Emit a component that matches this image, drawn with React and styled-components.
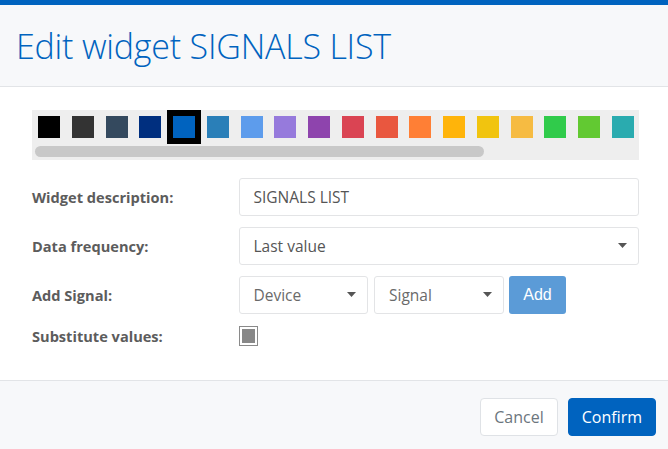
import React from 'react';
import styled, { createGlobalStyle } from 'styled-components';

const GlobalStyle = createGlobalStyle`
  html, body {
    margin: 0;
    padding: 0;
    background: #ffffff;
    font-family: "Open Sans", "Liberation Sans", sans-serif;
  }
  * { box-sizing: border-box; }
`;

const COLORS = [
  '#000000', '#333333', '#34495e', '#002f7f', '#0063bf', '#2a7fb8',
  '#5d9cec', '#967adc', '#8e44ad', '#da4453', '#e9573f', '#ff7f35',
  '#ffb40a', '#f1c40f', '#f6bb42', '#30cb4b', '#62c932', '#2aabaf',
  '#1abc9c', '#16a085', '#7f8c8d', '#95a5a6', '#bdc3c7', '#ecf0f1',
];

const Modal = styled.div`
  display: flex;
  flex-direction: column;
  height: 100vh;
  border-top: 5px solid #0063bf;
`;

const Header = styled.div`
  height: 82px;
  background: #f7f8fa;
  border-bottom: 1px solid #e2e4e7;
  padding: 0 0 0 16px;
  display: flex;
  align-items: center;
`;

const Title = styled.h1`
  margin: 0;
  font-size: 34px;
  font-weight: 300;
  color: #0063bf;
  letter-spacing: -0.2px;
`;

const Body = styled.div`
  flex: 1;
  padding: 23px 29px 0 32px;
`;

const Palette = styled.div`
  background: #eeeeee;
  height: 50px;
  overflow: hidden;
  padding: 6px 0 0 6px;
`;

const SwatchRow = styled.div`
  display: flex;
  gap: 11.75px;
  width: max-content;
`;

const Swatch = styled.span`
  flex: none;
  width: 22px;
  height: 22px;
  background: ${(p) => p.$color};
  outline: ${(p) => (p.$selected ? '6px solid #000' : 'none')};
`;

const Track = styled.div`
  margin: 8px 0 0 -3px;
`;

const Thumb = styled.div`
  height: 11px;
  border-radius: 6px;
  background: #c8c8c8;
`;

const Form = styled.div`
  display: grid;
  grid-template-columns: 206.5px 1fr;
  row-gap: 11.6px;
  align-items: center;
  margin-top: 18px;
`;

const Label = styled.label`
  font-size: 14.6px;
  font-weight: 700;
  color: #5c5c5c;
`;

const Field = styled.div`
  height: 37.5px;
  border: 1px solid #e3e4e6;
  border-radius: 3px;
  background: #fff;
  padding: 0 11px 0 14px;
  display: flex;
  align-items: center;
  justify-content: space-between;
  font-size: 15.5px;
  color: ${(p) => (p.$muted ? '#6a6a6a' : '#555555')};
  width: ${(p) => p.$width || 'auto'};
`;

const Inline = styled.div`
  display: flex;
  gap: 6.5px;
`;

const AddButton = styled.button`
  height: 37.5px;
  width: 57px;
  border: none;
  border-radius: 3px;
  background: #5b9bd7;
  color: #fff;
  font-family: "Liberation Sans", Arial, sans-serif;
  font-size: 16px;
  margin-left: -1px;
`;

const Check = styled.span`
  width: 19.5px;
  height: 20px;
  border: 1px solid #8a8a8a;
  padding: 2px;
  margin-top: 1px;
  display: block;
  &::after {
    content: '';
    display: block;
    width: 100%;
    height: 100%;
    background: #888888;
  }
`;

const Footer = styled.div`
  height: 69px;
  background: #f7f8fa;
  border-top: 1px solid #e2e4e7;
  display: flex;
  justify-content: flex-end;
  align-items: flex-start;
  gap: 10px;
  padding: 17px 12px 0 0;
`;

const Button = styled.button`
  height: 38px;
  padding: 0 13px;
  border-radius: 4px;
  border: 1px solid ${(p) => (p.$primary ? '#0063bf' : '#dfe2e6')};
  background: ${(p) => (p.$primary ? '#0063bf' : '#ffffff')};
  color: ${(p) => (p.$primary ? '#ffffff' : '#6c757d')};
  font-family: "Open Sans", sans-serif;
  font-size: 16px;
`;

const Caret = () => (
  <svg width="9" height="5" viewBox="0 0 9 5">
    <path d="M0 0h9L4.5 5z" fill="#555" />
  </svg>
);

export default function App() {
  return (
    <>
      <GlobalStyle />
      <Modal>
        <Header>
          <Title>Edit widget SIGNALS LIST</Title>
        </Header>
        <Body>
          <Palette>
            <SwatchRow>
              {COLORS.map((c, i) => (
                <Swatch key={c} $color={c} $selected={i === 4} />
              ))}
            </SwatchRow>
            <Track>
              <Thumb style={{ width: 449 }} />
            </Track>
          </Palette>
          <Form>
            <Label>Widget description:</Label>
            <Field>SIGNALS LIST</Field>
            <Label>Data frequency:</Label>
            <Field>
              Last value
              <Caret />
            </Field>
            <Label>Add Signal:</Label>
            <Inline>
              <Field $width="129px" $muted>
                Device
                <Caret />
              </Field>
              <Field $width="129.5px" $muted>
                Signal
                <Caret />
              </Field>
              <AddButton>Add</AddButton>
            </Inline>
            <Label>Substitute values:</Label>
            <div>
              <Check />
            </div>
          </Form>
        </Body>
        <Footer>
          <Button>Cancel</Button>
          <Button $primary>Confirm</Button>
        </Footer>
      </Modal>
    </>
  );
}
